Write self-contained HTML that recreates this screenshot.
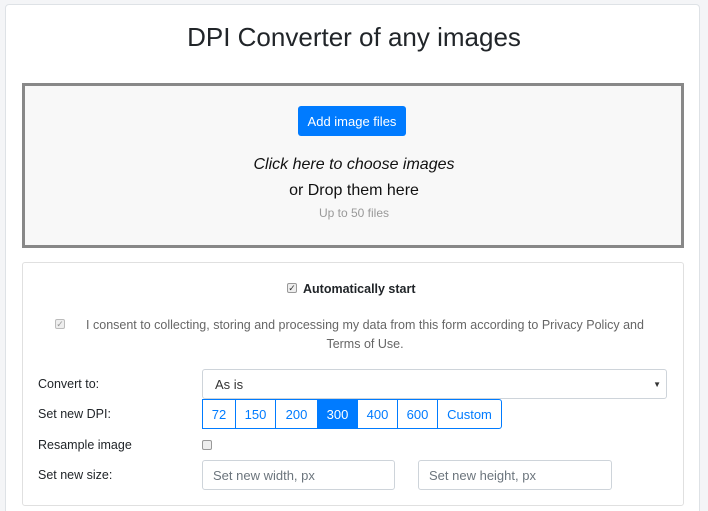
<!DOCTYPE html>
<html style="width:708px;height:511px;overflow:hidden"><head><style>
*{box-sizing:border-box;margin:0;padding:0}
body{width:708px;height:511px;overflow:hidden;background:#f4f5f7;font-family:"Liberation Sans",sans-serif;position:relative}
.card{position:absolute;left:5px;top:4px;width:695px;height:520px;background:#fff;border:1px solid #dee2e6;border-radius:4px}
.a{position:absolute}
h1{position:absolute;left:0;width:708px;top:22px;text-align:center;font-weight:normal;font-size:26px;color:#212529}
.drop{left:22px;top:83px;width:662px;height:165px;border:3px solid #888;background:#f8f8f8}
.btn{left:298px;top:106px;width:108px;height:30px;background:#007bff;color:#fff;border-radius:3px;font-size:13px;text-align:center;line-height:31px}
.c{left:0;width:708px;text-align:center}
.inner{left:22px;top:262px;width:662px;height:244px;border:1px solid #e0e0e0;border-radius:3px;background:#fff}
.lbl{left:38px;font-size:12.5px;color:#212529}
.inp{border:1px solid #ced4da;border-radius:3px;background:#fff;font-size:13px;color:#6c757d;padding-left:10px;line-height:30px}
.dpi{top:399px;height:30px;border:1px solid #007bff;color:#007bff;font-size:13px;text-align:center;line-height:29px}
.cb{width:10px;height:10px;border:1px solid #999;border-radius:2px;background:#eee;font-size:9px;line-height:8px;text-align:center;color:#333}
</style></head><body>
<div class="card"></div>
<h1>DPI Converter of any images</h1>
<div class="a drop"></div>
<div class="a btn">Add image files</div>
<div class="a c" style="top:156px;font-size:16px;font-style:italic;color:#111">Click here to choose images</div>
<div class="a c" style="top:182px;font-size:16px;color:#111">or Drop them here</div>
<div class="a c" style="top:206px;font-size:12px;color:#999">Up to 50 files</div>
<div class="a inner"></div>
<div class="a cb" style="left:287px;top:283px">✓</div>
<div class="a" style="left:303px;top:282px;font-size:12.5px;font-weight:bold;color:#212529">Automatically start</div>
<div class="a cb" style="left:55px;top:319px;color:#999;border-color:#bbb">✓</div>
<div class="a" style="left:73px;top:316px;width:584px;text-align:center;font-size:12.5px;line-height:19px;color:#666">I consent to collecting, storing and processing my data from this form according to Privacy Policy and<br>Terms of Use.</div>
<div class="a lbl" style="top:377px">Convert to:</div>
<div class="a inp" style="left:202px;top:369px;width:465px;height:30px;color:#333;padding-left:12px">As is<span style="position:absolute;right:5px;font-size:8px">▼</span></div>
<div class="a lbl" style="top:407px">Set new DPI:</div>
<div class="a dpi" style="left:202px;width:34px">72</div>
<div class="a dpi" style="left:235px;width:41px">150</div>
<div class="a dpi" style="left:275px;width:43px">200</div>
<div class="a dpi" style="left:317px;width:41px;background:#007bff;color:#fff">300</div>
<div class="a dpi" style="left:357px;width:41px">400</div>
<div class="a dpi" style="left:397px;width:41px">600</div>
<div class="a dpi" style="left:437px;width:65px;border-radius:0 3px 3px 0">Custom</div>
<div class="a lbl" style="top:438px">Resample image</div>
<div class="a cb" style="left:202px;top:440px"></div>
<div class="a lbl" style="top:468px">Set new size:</div>
<div class="a inp" style="left:202px;top:460px;width:193px;height:30px">Set new width, px</div>
<div class="a inp" style="left:418px;top:460px;width:194px;height:30px">Set new height, px</div>
</body></html>
